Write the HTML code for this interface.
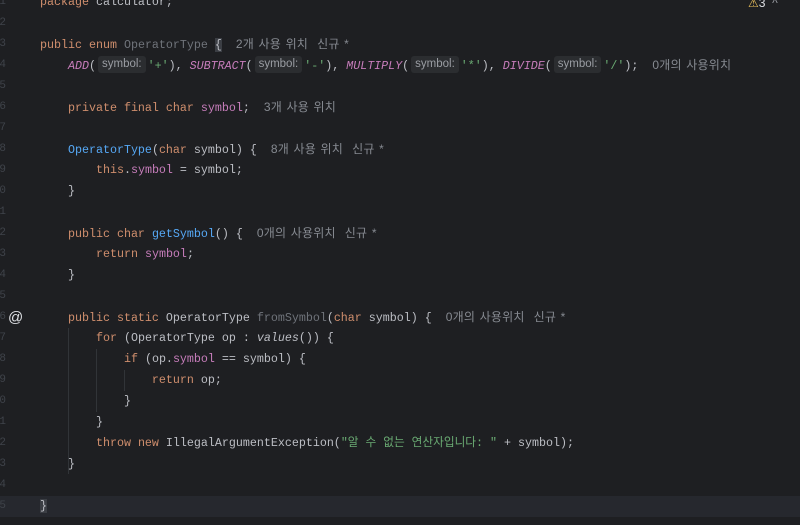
<!DOCTYPE html>
<html><head><meta charset="utf-8"><style>
body{margin:0;width:800px;height:523px;background:#1e1f22;overflow:hidden;position:relative;font-family:"Liberation Mono","Noto Sans CJK KR",monospace;font-size:11.67px;color:#bcbec4}
.w{position:absolute;left:0;top:2px;width:800px;height:523px}
.l{position:absolute;left:40px;height:21px;line-height:21px;white-space:pre}
.n{position:absolute;left:-4px;width:10px;height:21px;line-height:21px;color:#3f434a;font-size:11px;text-align:right}
.k{color:#cf8e6d}.f{color:#c77dbb}.g{color:#6f737a}.s{color:#6aab73}.m{color:#56a8f5}.e{color:#c77dbb;font-style:italic}.i{font-style:italic}
.h{color:#868a91;font-family:"Liberation Sans","Noto Sans CJK KR",sans-serif;font-size:12px;letter-spacing:0.2px;word-spacing:1px}
.b{display:inline-block;background:#2b2d30;color:#9a9da3;font-family:"Liberation Sans",sans-serif;font-size:11.5px;height:17px;line-height:17px;padding:0 4px;border-radius:3px;margin:0 2px;vertical-align:middle;position:relative;top:-1px}
.cur{position:absolute;left:0;top:494px;width:800px;height:21px;background:#26282e}
.guide{position:absolute;width:1px;background:#313438}
</style></head><body><div class="w">
<div class="cur"></div>
<div class="guide" style="left:68px;top:326px;height:146px"></div>
<div class="guide" style="left:96px;top:347px;height:63px"></div>
<div class="guide" style="left:124px;top:368px;height:21px"></div>
<div class="n" style="top:-10px">1</div><div class="n" style="top:11px">2</div><div class="n" style="top:32px">3</div><div class="n" style="top:53px">4</div><div class="n" style="top:74px">5</div><div class="n" style="top:95px">6</div><div class="n" style="top:116px">7</div><div class="n" style="top:137px">8</div><div class="n" style="top:158px">9</div><div class="n" style="top:179px">0</div><div class="n" style="top:200px">1</div><div class="n" style="top:221px">2</div><div class="n" style="top:242px">3</div><div class="n" style="top:263px">4</div><div class="n" style="top:284px">5</div><div class="n" style="top:305px">6</div><div class="n" style="top:326px">7</div><div class="n" style="top:347px">8</div><div class="n" style="top:368px">9</div><div class="n" style="top:389px">0</div><div class="n" style="top:410px">1</div><div class="n" style="top:431px">2</div><div class="n" style="top:452px">3</div><div class="n" style="top:473px">4</div><div class="n" style="top:494px">5</div>
<div style="position:absolute;left:8px;top:305px;height:21px;line-height:21px;font-size:15px;color:#dfe1e5;font-family:'Liberation Sans',sans-serif">@</div>
<div class="l" style="top:-10px"><span class="k">package</span> calculator;</div>
<div class="l" style="top:32px"><span class="k">public enum</span> <span class="g">OperatorType</span> <span style="background:#3b3e44">{</span>  <span class="h">2개 사용 위치  신규 *</span></div>
<div class="l" style="top:53px">    <span class="e">ADD</span>(<span class="b">symbol:</span><span class="s">'+'</span>), <span class="e">SUBTRACT</span>(<span class="b">symbol:</span><span class="s">'-'</span>), <span class="e">MULTIPLY</span>(<span class="b">symbol:</span><span class="s">'*'</span>), <span class="e">DIVIDE</span>(<span class="b">symbol:</span><span class="s">'/'</span>);  <span class="h">0개의 사용위치</span></div>
<div class="l" style="top:95px">    <span class="k">private final char</span> <span class="f">symbol</span>;  <span class="h">3개 사용 위치</span></div>
<div class="l" style="top:137px">    <span class="m">OperatorType</span>(<span class="k">char</span> symbol) {  <span class="h">8개 사용 위치  신규 *</span></div>
<div class="l" style="top:158px">        <span class="k">this</span>.<span class="f">symbol</span> = symbol;</div>
<div class="l" style="top:179px">    }</div>
<div class="l" style="top:221px">    <span class="k">public char</span> <span class="m">getSymbol</span>() {  <span class="h">0개의 사용위치  신규 *</span></div>
<div class="l" style="top:242px">        <span class="k">return</span> <span class="f">symbol</span>;</div>
<div class="l" style="top:263px">    }</div>
<div class="l" style="top:305px">    <span class="k">public static</span> OperatorType <span class="g">fromSymbol</span>(<span class="k">char</span> symbol) {  <span class="h">0개의 사용위치  신규 *</span></div>
<div class="l" style="top:326px">        <span class="k">for</span> (OperatorType op : <span class="i">values</span>()) {</div>
<div class="l" style="top:347px">            <span class="k">if</span> (op.<span class="f">symbol</span> == symbol) {</div>
<div class="l" style="top:368px">                <span class="k">return</span> op;</div>
<div class="l" style="top:389px">            }</div>
<div class="l" style="top:410px">        }</div>
<div class="l" style="top:431px">        <span class="k">throw new</span> IllegalArgumentException(<span class="s">"알 수 없는 연산자입니다: "</span> + symbol);</div>
<div class="l" style="top:452px">    }</div>
<div class="l" style="top:494px"><span style="background:#3b3e44">}</span></div>
</div>
<div style="position:absolute;left:748px;top:-4px;font-family:'Liberation Sans',sans-serif;font-size:12px;color:#dfe1e5;white-space:pre"><span style="color:#f2c55c">⚠</span>3  <span style="color:#9a9da3">^</span></div>
</body></html>
